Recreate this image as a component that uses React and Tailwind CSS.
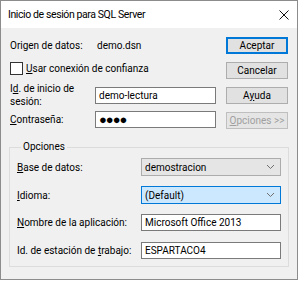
import React from 'react';

const font = { fontFamily: 'Roboto, "Liberation Sans", sans-serif' };

function Btn({ children, primary, disabled }) {
  return (
    <div
      className={`h-[17px] w-[62px] flex items-center justify-center text-[10px] border ${
        primary ? 'border-[#0078d7] bg-[#e1e1e1] ring-1 ring-inset ring-[#0078d7]' : disabled ? 'border-[#bfbfbf] bg-[#e5e5e5] text-[#a0a0a0]' : 'border-[#adadad] bg-[#e1e1e1]'
      }`}
    >
      {children}
    </div>
  );
}

function TextBox({ children, className = '' }) {
  return (
    <div className={`h-[17px] border border-[#7a7a7a] bg-white flex items-center px-[3px] text-[10px] ${className}`}>
      {children}
    </div>
  );
}

function Chevron() {
  return (
    <svg width="9" height="6" viewBox="0 0 9 6" className="shrink-0">
      <path d="M1 1 L4.5 4.5 L8 1" fill="none" stroke="#707070" strokeWidth="1" />
    </svg>
  );
}

export default function App() {
  return (
    <div className="w-[300px] h-[281px] bg-white text-black" style={font}>
      <div className="w-[298px] h-[280px] border border-[#8c8c8c] flex flex-col">
        {/* Title bar */}
        <div className="h-[27px] bg-white flex items-center justify-between pl-[7px] pr-[8px]">
          <span className="text-[10.5px] tracking-[-0.4px]">Inicio de sesión para SQL Server</span>
          <svg width="10" height="10" viewBox="0 0 10 10">
            <path d="M0.5 0.5 L9.5 9.5 M9.5 0.5 L0.5 9.5" stroke="#111" strokeWidth="1" />
          </svg>
        </div>

        {/* Body */}
        <div className="flex-1 bg-[#f0f0f0] px-[7px] pt-[9px]">
          <div className="flex">
            <div className="flex-1 text-[10px] pl-[2px]">
              <div className="h-[17px] flex items-center">
                <span className="w-[87px]">Origen de datos:</span>
                <span>demo.dsn</span>
              </div>
              <div className="h-[13px] mt-[8px] flex items-center gap-[3px]">
                <div className="w-[13px] h-[13px] border border-[#333] bg-white" />
                <span><u>U</u>sar conexión de confianza</span>
              </div>
              <div className="mt-[7px] flex items-center">
                <span className="w-[85px] leading-[13px]">
                  I<u>d</u>. de inicio de<br />sesión:
                </span>
                <TextBox className="w-[121px]">demo-lectura</TextBox>
              </div>
              <div className="mt-[3px] flex items-center">
                <span className="w-[85px]"><u>C</u>ontraseña:</span>
                <TextBox className="w-[121px] text-[13px] tracking-[-1px]">●●●●</TextBox>
              </div>
            </div>
            <div className="flex flex-col gap-[8px] pr-[2px]">
              <Btn primary>Aceptar</Btn>
              <Btn>Cancelar</Btn>
              <Btn>A<u>y</u>uda</Btn>
              <Btn disabled><u>O</u>pciones &gt;&gt;</Btn>
            </div>
          </div>

          <fieldset className="mt-[12px] mx-[1px] border border-[#dcdcdc] h-[126px] px-[7px] text-[10px]">
            <legend className="ml-[4px] px-[2px] leading-[12px]">Opciones</legend>
            <div className="flex items-center justify-between mt-[5px]">
              <span><u>B</u>ase de datos:</span>
              <div className="w-[140px] h-[18px] border border-[#acacac] bg-[#e5e5e5] flex items-center justify-between pl-[3px] pr-[5px]">
                <span>demostracion</span>
                <Chevron />
              </div>
            </div>
            <div className="flex items-center justify-between mt-[10px]">
              <span><u>I</u>dioma:</span>
              <div className="w-[140px] h-[18px] border border-[#0078d7] bg-[#cce8ff] flex items-center justify-between pl-[3px] pr-[5px]">
                <span>(Default)</span>
                <Chevron />
              </div>
            </div>
            <div className="flex items-center justify-between mt-[10px]">
              <span><u>N</u>ombre de la aplicación:</span>
              <TextBox className="w-[140px]">Microsoft Office 2013</TextBox>
            </div>
            <div className="flex items-center justify-between mt-[11px]">
              <span>Id. de estación de <u>t</u>rabajo:</span>
              <TextBox className="w-[140px]">ESPARTACO4</TextBox>
            </div>
          </fieldset>
        </div>
      </div>
    </div>
  );
}
